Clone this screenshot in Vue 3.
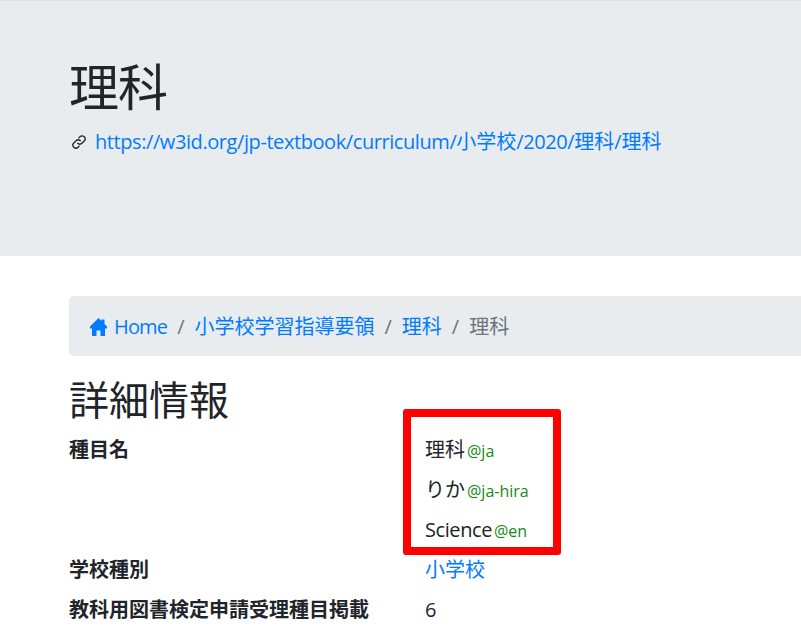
<template>
  <div class="page">
    <header class="jumbotron">
      <div class="container">
        <h1>理科</h1>
        <p class="lead">
          <svg class="link-icon" viewBox="0 0 24 24" aria-hidden="true">
            <path d="M10 14a4.5 4.5 0 0 0 6.4 0l3.4-3.4a4.5 4.5 0 0 0-6.4-6.4l-1.6 1.6" />
            <path d="M14 10a4.5 4.5 0 0 0-6.4 0l-3.4 3.4a4.5 4.5 0 0 0 6.4 6.4l1.6-1.6" />
          </svg>
          <a href="#"><span class="en">https://w3id.org/jp-textbook/curriculum/</span>小学校<span class="en">/2020/</span>理科/理科</a>
        </p>
      </div>
    </header>

    <main class="container">
      <nav class="breadcrumb">
        <a href="#" class="crumb">
          <svg class="home-icon" viewBox="0 0 17 18" aria-hidden="true">
            <path d="M8.5 0L11.5 3V1.5H14.5V6L17 8.5V10.5H15V18H10.5V12.5H6.5V18H2V10.5H0V8.5Z" />
          </svg>
          <span class="en home">Home</span>
        </a>
        <span class="sep">/</span>
        <a href="#" class="crumb">小学校学習指導要領</a>
        <span class="sep">/</span>
        <a href="#" class="crumb">理科</a>
        <span class="sep">/</span>
        <span class="current">理科</span>
      </nav>

      <h2>詳細情報</h2>

      <dl class="details">
        <dt>種目名</dt>
        <dd class="names">
          <div v-for="name in names" :key="name.tag" class="name">
            <span :class="{ en: name.tag === 'en' }">{{ name.text }}</span><small>@{{ name.tag }}</small>
          </div>
          <div class="highlight"></div>
        </dd>
        <dt>学校種別</dt>
        <dd><a href="#">小学校</a></dd>
        <dt>教科用図書検定申請受理種目掲載</dt>
        <dd>6</dd>
      </dl>
    </main>
  </div>
</template>

<script setup>
const names = [
  { text: '理科', tag: 'ja' },
  { text: 'りか', tag: 'ja-hira' },
  { text: 'Science', tag: 'en' }
];
</script>

<style>
html, body { margin: 0; overflow: hidden; }
</style>

<style scoped>
.page {
  width: 801px;
  height: 630px;
  overflow: hidden;
  background: #fff;
  color: #212529;
  font-family: "Open Sans", "Noto Sans CJK JP", sans-serif;
  font-size: 20px;
  line-height: 30px;
}
a { color: #007bff; text-decoration: none; }
.en { letter-spacing: -0.42px; }
.container { padding-left: 69px; width: 1000px; }

.jumbotron {
  box-sizing: border-box;
  height: 256px;
  margin-bottom: 40px;
  padding-top: 56px;
  background: #e9ecef;
  border-top: 1px solid #dee2e6;
}
h1 { margin: 0 0 10px; font-size: 50px; font-weight: 400; line-height: 60px; letter-spacing: -1px; }
.lead { margin: 0; display: flex; align-items: center; white-space: nowrap; }
.link-icon {
  width: 16px;
  height: 16px;
  margin: 0 8px 0 2px;
  fill: none;
  stroke: #212529;
  stroke-width: 2;
  stroke-linecap: round;
}

.breadcrumb {
  display: flex;
  align-items: center;
  box-sizing: border-box;
  height: 60px;
  margin-bottom: 20px;
  padding: 2px 20px 0 21px;
  background: #e9ecef;
  border-radius: 5px;
  white-space: nowrap;
}
.home-icon { width: 17px; height: 18px; fill: #007bff; vertical-align: -2px; margin-right: 7px; }
.home { letter-spacing: -0.85px; }
.sep { padding: 0 10px; color: #6c757d; }
.current { color: #6c757d; }

h2 { margin: 0 0 11px; font-size: 40px; font-weight: 400; line-height: 48px; }

.details {
  display: grid;
  grid-template-columns: 356px 1fr;
  margin: 0;
}
dt { font-weight: 700; }
dd { margin: 0 0 10px; }
.names { position: relative; margin-bottom: 0; }
.name { margin-bottom: 10px; }
small { margin-left: 2px; font-size: 16px; line-height: 1; color: #128a12; }
.highlight {
  position: absolute;
  left: -22px;
  top: -26px;
  box-sizing: border-box;
  width: 158px;
  height: 146px;
  border: 8px solid #f00;
  border-radius: 3px;
}
</style>
